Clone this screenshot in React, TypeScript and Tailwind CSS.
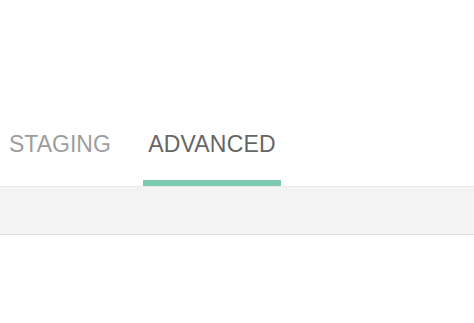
import React from 'react';

const App: React.FC = () => {
  return (
    <div className="w-[474px] h-[323px] bg-white overflow-hidden" style={{ fontFamily: '"Liberation Sans", Arial, sans-serif' }}>
      <div className="flex items-end pt-[131px]">
        <div className="flex flex-col w-[143px] pl-[9px]">
          <span className="text-[23px] leading-[26px] text-[#9d9d9d]">STAGING</span>
          <div className="mt-[23px] h-[6px]" />
        </div>
        <div className="flex flex-col w-[138px]">
          <span className="text-[23px] leading-[26px] text-center tracking-[0.2px] text-[#666666]">ADVANCED</span>
          <div className="mt-[23px] h-[6px] bg-[#7ccab1]" />
        </div>
      </div>
      <div className="h-[49px] bg-[#f3f3f3] border-t border-t-[#ebebeb] border-b border-b-[#dedede]" />
    </div>
  );
};

export default App;
